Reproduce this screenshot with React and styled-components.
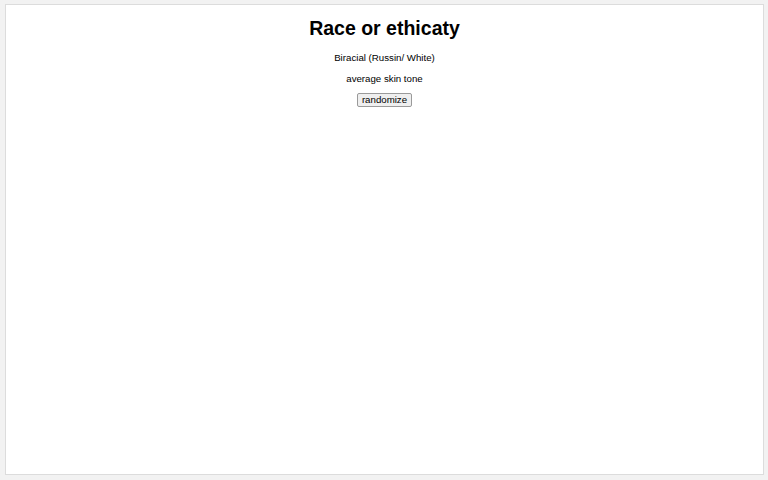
import React from 'react'
import styled, { createGlobalStyle } from 'styled-components'

const GlobalStyle = createGlobalStyle`
  html, body {
    margin: 0;
    height: 100%;
  }
  body {
    background: #f2f2f2;
    font-family: "Liberation Sans", Arial, sans-serif;
  }
  #root {
    height: 100%;
  }
`

const Page = styled.div`
  box-sizing: border-box;
  height: 100%;
  padding: 4px 4px 5px 5px;
  display: flex;
`

const Card = styled.main`
  flex: 1;
  background: #fff;
  border: 1px solid #dcdcdc;
  display: flex;
  flex-direction: column;
  align-items: center;
  padding-top: 11px;
`

const Title = styled.h1`
  margin: 0 0 12px;
  font-size: 19.5px;
  line-height: 24px;
  font-weight: bold;
  color: #000;
`

const Line = styled.p`
  margin: 0 0 ${p => p.$gap}px;
  font-size: 9.7px;
  line-height: 12px;
  color: #000;
`

const Button = styled.button`
  font-family: "Liberation Sans", Arial, sans-serif;
  font-size: 9.7px;
  line-height: 12px;
  height: 14px;
  padding: 0 4px;
  background: #efefef;
  border: 1px solid #9a9a9a;
  border-radius: 2px;
  color: #000;
`

export default function App() {
  return (
    <>
      <GlobalStyle />
      <Page>
        <Card>
          <Title>Race or ethicaty</Title>
          <Line $gap={9}>Biracial (Russin/ White)</Line>
          <Line $gap={8}>average skin tone</Line>
          <Button>randomize</Button>
        </Card>
      </Page>
    </>
  )
}
